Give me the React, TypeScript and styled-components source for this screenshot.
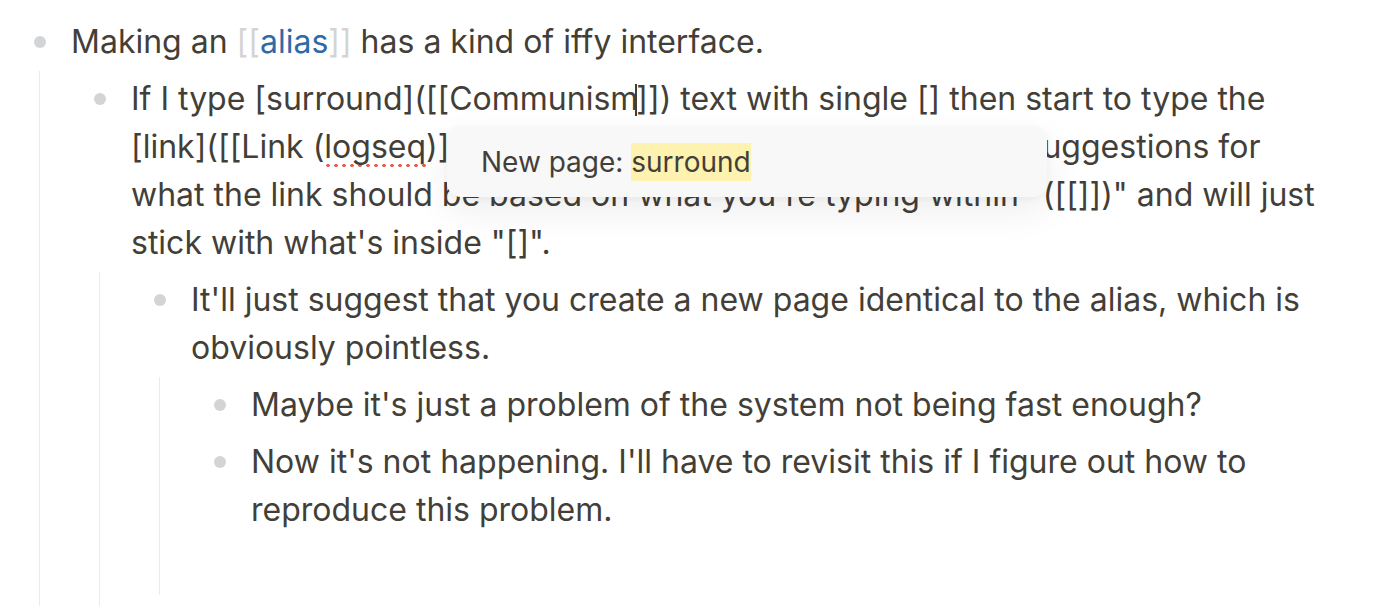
import React from "react";
import styled, { createGlobalStyle } from "styled-components";

const GlobalStyle = createGlobalStyle`
  html, body {
    margin: 0;
    padding: 0;
    background: #ffffff;
  }
  body {
    font-family: Inter, "Noto Sans", sans-serif;
    color: #433f38;
  }
`;

const Page = styled.div`
  position: relative;
  height: 606px;
  overflow: hidden;
  padding: 14px 58px 0 24px;
  box-sizing: border-box;
`;

const Block = styled.div``;

const Row = styled.div`
  display: flex;
  padding: 4px 0 5px;
`;

const BulletBox = styled.div`
  flex: none;
  width: 32px;
  height: 48px;
  display: flex;
  align-items: center;
  justify-content: center;
`;

const Dot = styled.span`
  width: 12px;
  height: 12px;
  border-radius: 50%;
  background: #d3d4d6;
`;

const Content = styled.div`
  flex: 1;
  padding-left: 15px;
  font-size: 32px;
  line-height: 48px;
`;

const Children = styled.div<{ $tail?: number }>`
  margin-left: 15px;
  padding-left: 44px;
  border-left: 1px solid #ebebeb;
  padding-bottom: ${(p) => p.$tail ?? 0}px;
`;

const Bracket = styled.span`
  color: #d4d4d4;
`;

const PageRef = styled.span`
  color: #2f6aa7;
`;

const Caret = styled.span`
  display: inline-block;
  width: 2px;
  height: 32px;
  margin: 0 -1px 0 -3px;
  vertical-align: -6px;
  background: #433f38;
`;

const Misspelled = styled.span`
  background-image: radial-gradient(circle, #ee5a4c 1.6px, transparent 1.9px);
  background-size: 8px 5px;
  background-repeat: repeat-x;
  background-position: 0 100%;
  padding-bottom: 2px;
`;

const Popup = styled.div`
  position: absolute;
  left: 447px;
  top: 126px;
  width: 600px;
  height: 71px;
  box-sizing: border-box;
  padding-left: 34px;
  display: flex;
  align-items: center;
  background: #f8f8f8;
  border-radius: 14px;
  box-shadow: 0 14px 36px rgba(0, 0, 0, 0.07), 0 2px 6px rgba(0, 0, 0, 0.04);
  font-size: 28px;
  color: #433f38;
`;

const Highlight = styled.span`
  background: #fdf2b0;
  padding: 2px 0;
`;

type Item = {
  text: React.ReactNode;
  children?: Item[];
  tail?: number;
};

const tree: Item[] = [
  {
    text: (
      <>
        Making an <Bracket>[[</Bracket>
        <PageRef>alias</PageRef>
        <Bracket>]]</Bracket> has a kind of iffy interface.
      </>
    ),
    tail: 80,
    children: [
      {
        text: (
          <>
            If I type [surround]([[Communism
            <Caret />
            ]]) text with single [] then start to type the [link]([[Link (
            <Misspelled>logseq</Misspelled>)]]) syntax, it will not really give me any
            suggestions for what the link should be based on what you're typing within
            "([[]])" and will just stick with what's inside "[]".
          </>
        ),
        tail: 70,
        children: [
          {
            text: (
              <>
                It'll just suggest that you create a new page identical to the alias,
                which is obviously pointless.
              </>
            ),
            tail: 56,
            children: [
              { text: <>Maybe it's just a problem of the system not being fast enough?</> },
              {
                text: (
                  <>
                    Now it's not happening. I'll have to revisit this if I figure out how
                    to reproduce this problem.
                  </>
                ),
              },
            ],
          },
        ],
      },
    ],
  },
];

function BlockView({ item }: { item: Item }) {
  return (
    <Block>
      <Row>
        <BulletBox>
          <Dot />
        </BulletBox>
        <Content>{item.text}</Content>
      </Row>
      {item.children && (
        <Children $tail={item.tail}>
          {item.children.map((c, i) => (
            <BlockView key={i} item={c} />
          ))}
        </Children>
      )}
    </Block>
  );
}

export default function App() {
  return (
    <>
      <GlobalStyle />
      <Page>
        {tree.map((item, i) => (
          <BlockView key={i} item={item} />
        ))}
        <Popup>
          New page:&nbsp;<Highlight>surround</Highlight>
        </Popup>
      </Page>
    </>
  );
}
